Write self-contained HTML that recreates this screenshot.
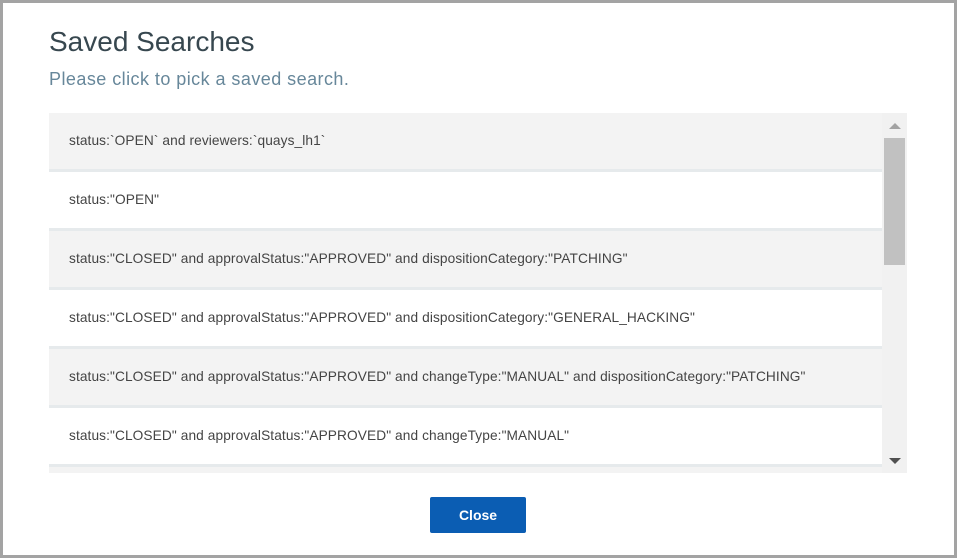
<!DOCTYPE html>
<html><head><style>
*{margin:0;padding:0;box-sizing:border-box}
body{width:957px;height:558px;background:#a3a3a3;font-family:"Liberation Sans",sans-serif;position:relative;overflow:hidden}
.dlg{position:absolute;left:3px;top:3px;width:951px;height:552px;background:#fff}
h1{position:absolute;left:46px;top:23px;font-size:28px;font-weight:normal;color:#37474f;white-space:nowrap}
.sub{position:absolute;left:46px;top:66px;font-size:18px;letter-spacing:0.45px;color:#67879a;white-space:nowrap}
.list{position:absolute;left:46px;top:110px;width:858px;height:360px;background:#f2f2f2;overflow:hidden}
.row{height:59px;border-bottom:3px solid #e6eaec;font-size:13.7px;letter-spacing:0.1px;color:#444;padding-left:20px;line-height:56px;width:833px;white-space:nowrap}
.g{background:#f3f3f3}.w{background:#fff}
.sb{position:absolute;left:833px;top:0;width:25px;height:360px;background:#f1f1f1}
.thumb{position:absolute;left:2px;top:25px;width:21px;height:127px;background:#c1c1c1}
.up{position:absolute;left:7px;top:10px;width:0;height:0;border-left:6px solid transparent;border-right:6px solid transparent;border-bottom:6px solid #a3a3a3}
.dn{position:absolute;left:7px;top:345px;width:0;height:0;border-left:6px solid transparent;border-right:6px solid transparent;border-top:6px solid #505050}
.btn{position:absolute;left:427px;top:494px;width:96px;height:36px;background:#0b5db3;border-radius:2px;color:#fff;font-weight:bold;font-size:14px;text-align:center;line-height:36px}
</style></head><body>
<div class="dlg">
<h1>Saved Searches</h1>
<div class="sub">Please click to pick a saved search.</div>
<div class="list">
<div class="row g">status:`OPEN` and reviewers:`quays_lh1`</div>
<div class="row w">status:"OPEN"</div>
<div class="row g">status:"CLOSED" and approvalStatus:"APPROVED" and dispositionCategory:"PATCHING"</div>
<div class="row w">status:"CLOSED" and approvalStatus:"APPROVED" and dispositionCategory:"GENERAL_HACKING"</div>
<div class="row g">status:"CLOSED" and approvalStatus:"APPROVED" and changeType:"MANUAL" and dispositionCategory:"PATCHING"</div>
<div class="row w">status:"CLOSED" and approvalStatus:"APPROVED" and changeType:"MANUAL"</div>
<div class="row g"></div>
<div class="sb"><div class="up"></div><div class="thumb"></div><div class="dn"></div></div>
</div>
<div class="btn">Close</div>
</div>
</body></html>
